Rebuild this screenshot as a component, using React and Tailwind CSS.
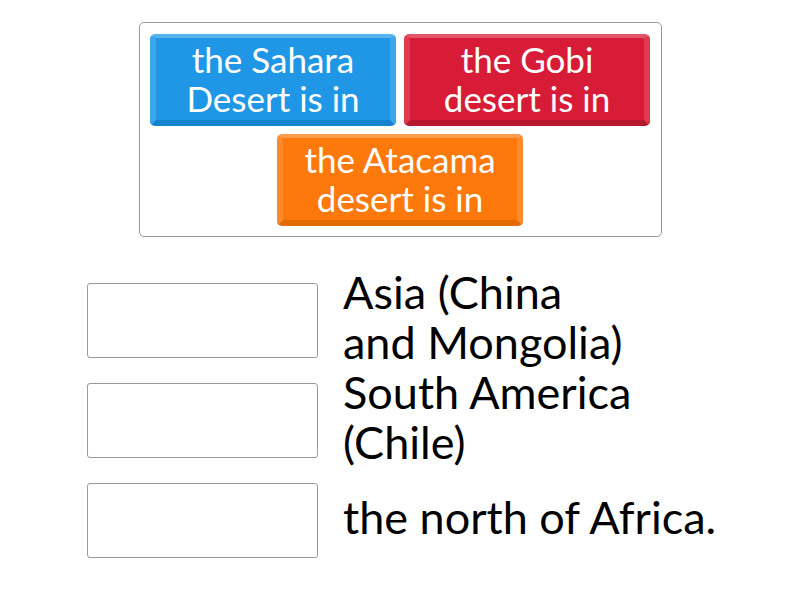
import React from 'react'

const tiles = [
  { text: ['the Sahara', 'Desert is in'], cls: 'bg-[#1f97e6] border-t-[#56b3ef] border-x-[#3ba6eb] border-b-[#1484d1]' },
  { text: ['the Gobi', 'desert is in'], cls: 'bg-[#d81b36] border-t-[#e3566a] border-x-[#de3a50] border-b-[#b8182d]' },
  { text: ['the Atacama', 'desert is in'], cls: 'bg-[#fd790b] border-t-[#ff9d4c] border-x-[#ff8a2b] border-b-[#e26a02]' },
]

const rows = [
  ['Asia (China', 'and Mongolia)'],
  ['South America', '(Chile)'],
  ['the north of Africa.'],
]

function Tile({ text, cls }) {
  return (
    <div className={`w-[246px] h-[92px] rounded-[5px] border-t-[4px] border-x-[6px] border-b-[6px] flex flex-col items-center justify-center text-white text-[35px] leading-[39px] ${cls}`}>
      {text.map((t) => <span key={t}>{t}</span>)}
    </div>
  )
}

export default function App() {
  return (
    <div className="w-[800px] h-[600px] bg-white font-['Lato',sans-serif] text-black overflow-hidden">
      <div className="h-[22px]" />
      <div className="mx-auto w-[523px] h-[215px] border border-[#9a9a9a] rounded-[5px] px-[10px] pt-[11px] flex flex-wrap justify-center content-start gap-2">
        {tiles.map((t) => <Tile key={t.text[0]} {...t} />)}
      </div>
      <div className="mt-[33px] pl-[87px]">
        {rows.map((lines) => (
          <div key={lines[0]} className="h-[100px] flex items-center">
            <div className="w-[231px] h-[75px] border border-[#9a9a9a] rounded-[3px] shrink-0" />
            <div className="ml-[25px] pb-[6px] text-[45px] leading-[50px] whitespace-nowrap">
              {lines.map((l) => <div key={l}>{l}</div>)}
            </div>
          </div>
        ))}
      </div>
    </div>
  )
}
